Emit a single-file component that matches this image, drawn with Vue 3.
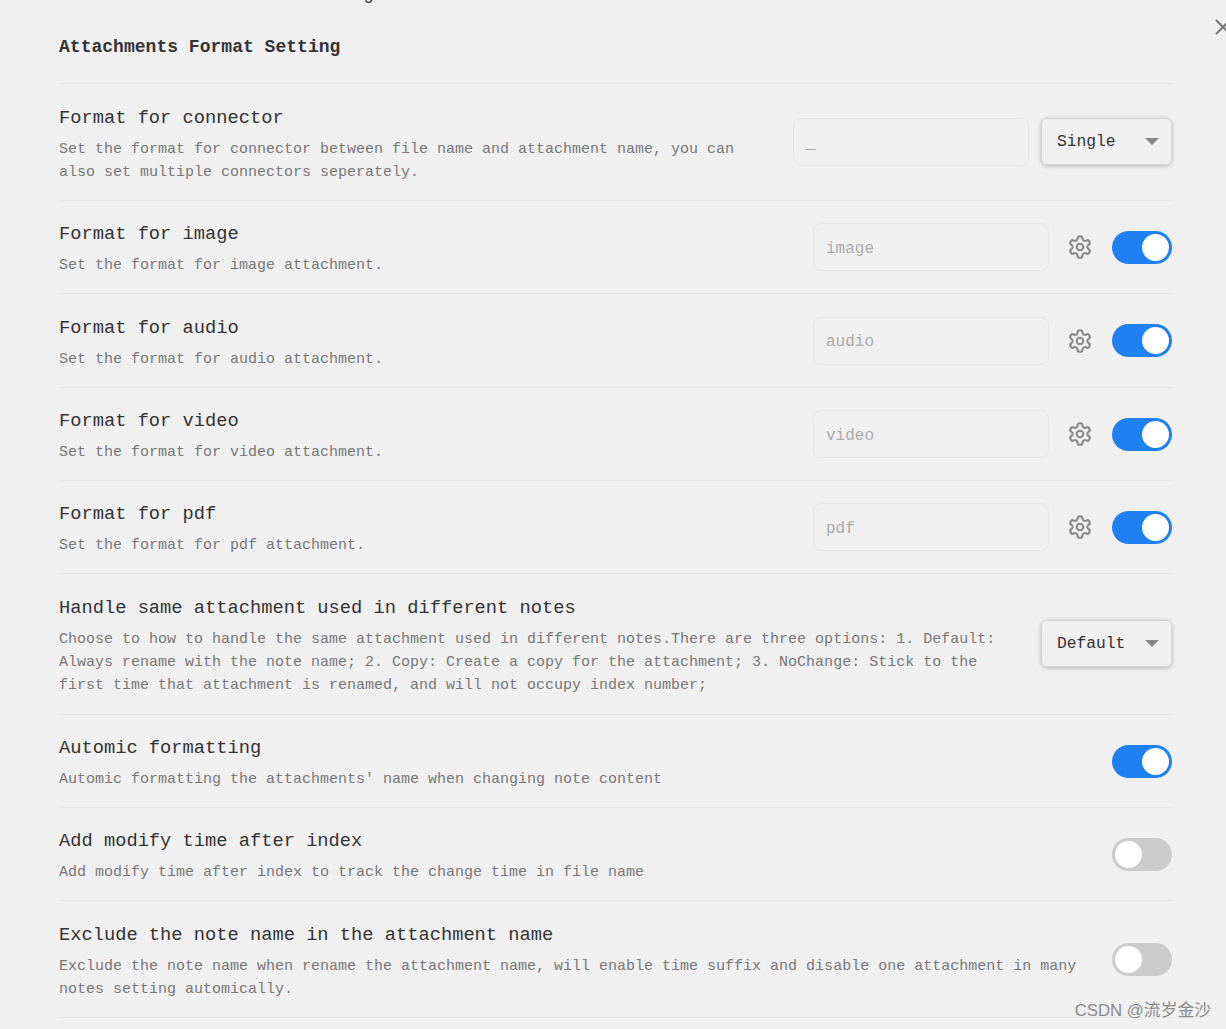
<template>
  <div class="page">
    <span class="clipped">g</span>
    <button class="close" aria-label="Close">
      <svg width="16" height="16" viewBox="0 0 16 16"><path d="M1 1 L15 15 M15 1 L1 15" /></svg>
    </button>
    <h3 class="heading">Attachments Format Setting</h3>
    <div v-for="r in rows" :key="r.name" class="row" :class="r.cls">
      <div class="info">
        <div class="name">{{ r.name }}</div>
        <div class="desc">{{ r.desc }}</div>
      </div>
      <div class="controls">
        <input v-if="r.input" class="text" :class="{ wide: r.select }" :placeholder="r.input" />
        <div v-if="r.select" class="select">
          <span>{{ r.select }}</span>
          <i class="caret"></i>
        </div>
        <svg v-if="r.gear" class="gear" width="26" height="26" viewBox="0 0 24 24">
          <circle cx="12" cy="12" r="3" />
          <path d="M12.22 2h-.44a2 2 0 0 0-2 2v.18a2 2 0 0 1-1 1.73l-.43.25a2 2 0 0 1-2 0l-.15-.08a2 2 0 0 0-2.73.73l-.22.38a2 2 0 0 0 .73 2.73l.15.1a2 2 0 0 1 1 1.72v.51a2 2 0 0 1-1 1.74l-.15.09a2 2 0 0 0-.73 2.73l.22.38a2 2 0 0 0 2.73.73l.15-.08a2 2 0 0 1 2 0l.43.25a2 2 0 0 1 1 1.73V20a2 2 0 0 0 2 2h.44a2 2 0 0 0 2-2v-.18a2 2 0 0 1 1-1.73l.43-.25a2 2 0 0 1 2 0l.15.08a2 2 0 0 0 2.73-.73l.22-.39a2 2 0 0 0-.73-2.73l-.15-.08a2 2 0 0 1-1-1.74v-.5a2 2 0 0 1 1-1.74l.15-.09a2 2 0 0 0 .73-2.73l-.22-.38a2 2 0 0 0-2.73-.73l-.15.08a2 2 0 0 1-2 0l-.43-.25a2 2 0 0 1-1-1.73V4a2 2 0 0 0-2-2z" />
        </svg>
        <div v-if="r.toggle !== undefined" class="toggle" :class="{ on: r.toggle }"><b></b></div>
      </div>
    </div>
    <div class="watermark">CSDN @流岁金沙</div>
  </div>
</template>

<script setup>
const rows = [
  { name: 'Format for connector', desc: 'Set the format for connector between file name and attachment name, you can also set multiple connectors seperately.', input: '_', select: 'Single', cls: 'connector' },
  { name: 'Format for image', desc: 'Set the format for image attachment.', input: 'image', gear: true, toggle: true },
  { name: 'Format for audio', desc: 'Set the format for audio attachment.', input: 'audio', gear: true, toggle: true, cls: 'tall' },
  { name: 'Format for video', desc: 'Set the format for video attachment.', input: 'video', gear: true, toggle: true },
  { name: 'Format for pdf', desc: 'Set the format for pdf attachment.', input: 'pdf', gear: true, toggle: true },
  { name: 'Handle same attachment used in different notes', desc: 'Choose to how to handle the same attachment used in different notes.There are three options: 1. Default: Always rename with the note name; 2. Copy: Create a copy for the attachment; 3. NoChange: Stick to the first time that attachment is renamed, and will not occupy index number;', select: 'Default', cls: 'handle' },
  { name: 'Automic formatting', desc: "Automic formatting the attachments' name when changing note content", toggle: true },
  { name: 'Add modify time after index', desc: 'Add modify time after index to track the change time in file name', toggle: false },
  { name: 'Exclude the note name in the attachment name', desc: 'Exclude the note name when rename the attachment name, will enable time suffix and disable one attachment in many notes setting automically.', toggle: false, cls: 'exclude' },
]
</script>

<style>
html, body { margin: 0; background: #f0f0f0; }
</style>

<style scoped>
.page {
  position: relative;
  width: 1226px; height: 1029px; overflow: hidden;
  box-sizing: border-box; padding: 0 54px 0 59px;
  background: #f0f0f0; color: #333;
  font-family: "Liberation Mono", "Noto Sans CJK SC", monospace;
}
.clipped {
  position: absolute; left: 363px; top: -16px;
  font-size: 18px; line-height: 20px; color: #333;
}
.close {
  position: absolute; left: 1215px; top: 19px;
  padding: 0; border: 0; background: none;
}
.close path { stroke: #777; stroke-width: 2; fill: none; }
.heading {
  margin: 0; height: 84px; box-sizing: border-box;
  padding-top: 36px;
  font-size: 18px; line-height: 22px; font-weight: 700; letter-spacing: .02px;
  border-bottom: 1px solid #e6e6e6;
}
.row {
  display: flex; align-items: center; justify-content: space-between; gap: 20px;
  height: 93px; box-sizing: border-box;
  border-bottom: 1px solid #e6e6e6;
}
.connector { height: 117px; }
.tall { height: 94px; }
.handle { height: 141px; }
.exclude { height: 117px; }
.info { padding-top: 5px; flex: none; }
.name {
  font-size: 18.73px; line-height: 24px; color: #333;
  margin-bottom: 8px;
}
.desc {
  font-size: 15px; line-height: 23px; color: #777;
}
.connector .info { width: 680px; }
.handle .info { width: 945px; }
.exclude .info { width: 1025px; }
.controls {
  display: flex; align-items: center; flex: none;
}
.text {
  width: 236px; height: 48px; box-sizing: border-box;
  padding: 3px 12px 0 12px;
  background: #f0f0f0;
  border: 1px solid #e7e7e7; border-radius: 8px; outline: none;
  font: 16px "Liberation Mono", monospace;
}
.text::placeholder { color: #aaa; opacity: 1; }
.text.wide { margin-right: 12px; }
.select {
  display: flex; align-items: center; justify-content: space-between;
  width: 131px; height: 47px; box-sizing: border-box;
  padding: 0 12px 0 15px; margin-bottom: 1px;
  border: 1px solid #d4d4d4; border-radius: 6px;
  box-shadow: 0 1px 4px rgba(0, 0, 0, .25);
  font-size: 16.3px; color: #333;
}
.caret {
  width: 0; height: 0;
  border-left: 7px solid transparent; border-right: 7px solid transparent;
  border-top: 7px solid #888;
}
.gear { margin: 0 19px 0 18px; fill: none; stroke: #888; stroke-width: 1.9; }
.toggle {
  display: flex; align-items: center;
  width: 60px; height: 33px; box-sizing: border-box;
  padding: 3px; border-radius: 17px;
  background: #cbcbcb;
}
.toggle b {
  width: 27px; height: 27px; border-radius: 50%; background: #fff;
}
.toggle.on { background: #1f80f2; justify-content: flex-end; }
.watermark {
  position: absolute; right: 15px; top: 1000px;
  font: 16.8px/22px "Liberation Sans", "Noto Sans CJK SC", sans-serif;
  color: #8a8a8a;
}
</style>
